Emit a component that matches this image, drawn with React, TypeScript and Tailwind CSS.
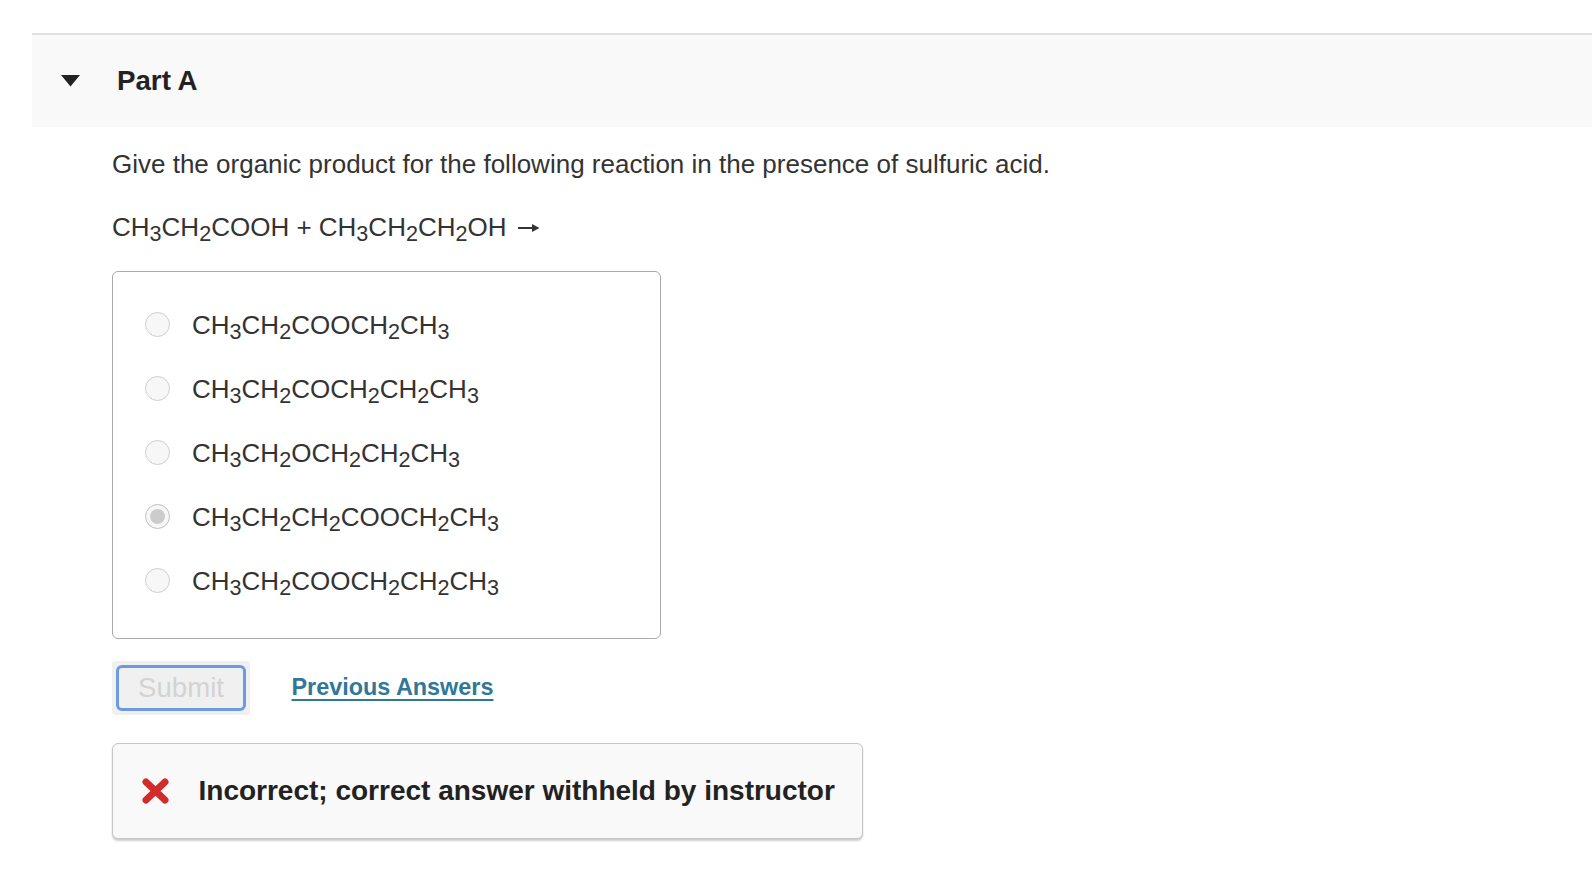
import React from "react";

const F = { fontFamily: '"Liberation Sans", Arial, Helvetica, sans-serif' };

function Formula({ parts }: { parts: (string | number)[] }) {
  return (
    <span>
      {parts.map((p, i) =>
        typeof p === "number" ? (
          <sub key={i} className="text-[0.83em]">
            {p}
          </sub>
        ) : (
          <React.Fragment key={i}>{p}</React.Fragment>
        )
      )}
    </span>
  );
}

const options: (string | number)[][] = [
  ["CH", 3, "CH", 2, "COOCH", 2, "CH", 3],
  ["CH", 3, "CH", 2, "COCH", 2, "CH", 2, "CH", 3],
  ["CH", 3, "CH", 2, "OCH", 2, "CH", 2, "CH", 3],
  ["CH", 3, "CH", 2, "CH", 2, "COOCH", 2, "CH", 3],
  ["CH", 3, "CH", 2, "COOCH", 2, "CH", 2, "CH", 3],
];

export default function App() {
  return (
    <div className="min-h-screen bg-white pl-[32px] pt-[33px] text-[#333333]" style={F}>
      <div className="h-[2px] bg-[#e0e0e0]" />
      <div className="flex h-[92px] items-center bg-[#f9f9f9]">
        <svg width="19" height="12" viewBox="0 0 19 12" className="ml-[29px]">
          <path d="M0 0 H19 L9.5 11.5 Z" fill="#222222" />
        </svg>
        <span className="ml-[37px] text-[27.7px] font-bold text-[#222222]">Part A</span>
      </div>
      <div className="pl-[80px]">
        <p className="mt-[18.5px] text-[26px] leading-[36px]">
          Give the organic product for the following reaction in the presence of sulfuric acid.
        </p>
        <p className="mt-[27px] flex items-center text-[26px] leading-[36px]">
          <Formula parts={["CH", 3, "CH", 2, "COOH + CH", 3, "CH", 2, "CH", 2, "OH"]} />
          <svg width="22" height="10" viewBox="0 0 22 10" className="ml-[11px] mt-[2px]">
            <path d="M0 5 H16" stroke="#333333" strokeWidth="2" />
            <path d="M14 1 L21.5 5 L14 9 Z" fill="#333333" />
          </svg>
        </p>
        <div className="mt-[26.5px] flex h-[368px] w-[549px] flex-col rounded-[6px] border-[1.5px] border-[#a9a9a9] pt-[20.5px]">
          {options.map((o, i) => (
            <div key={i} className="flex h-[64px] items-center pl-[32px]">
              <span
                className={
                  "flex h-[25px] w-[25px] items-center justify-center rounded-full border-[1.5px] bg-[#f7f7f7] " +
                  (i === 3 ? "border-[#c0c0c0]" : "border-[#cfcfcf]")
                }
              >
                {i === 3 && <span className="h-[15px] w-[15px] rounded-full bg-[#cccccc]" />}
              </span>
              <span className="ml-[22px] text-[26px] leading-[36px]">
                <Formula parts={o} />
              </span>
            </div>
          ))}
        </div>
        <div className="mt-[22px] flex items-center">
          <div className="flex h-[54px] w-[138px] items-center justify-center rounded-[3px] bg-[#f0f0f0]">
            <div className="flex h-[46px] w-[130px] items-center justify-center rounded-[6px] border-[3px] border-[#6e9ae0] bg-[#f0f0f0] text-[27.6px] text-[#d3d3d3]">
              Submit
            </div>
          </div>
          <a className="ml-[41.5px] text-[23.4px] font-bold text-[#2f7898] underline decoration-[2px] underline-offset-[4px]">
            Previous Answers
          </a>
        </div>
        <div className="mt-[28px] flex h-[96px] w-[751px] items-center rounded-[6px] border-[1.5px] border-[#c6c6c6] bg-[#f9f9f9] shadow-[0_2px_2px_rgba(0,0,0,0.2)]">
          <svg width="27" height="26" viewBox="0 0 27 26" className="ml-[29px]">
            <path d="M4 4 L23 22 M23 4 L4 22" stroke="#d12b2b" strokeWidth="7" strokeLinecap="round" />
          </svg>
          <span className="ml-[29.5px] text-[28px] font-bold text-[#222222]">
            Incorrect; correct answer withheld by instructor
          </span>
        </div>
      </div>
    </div>
  );
}
